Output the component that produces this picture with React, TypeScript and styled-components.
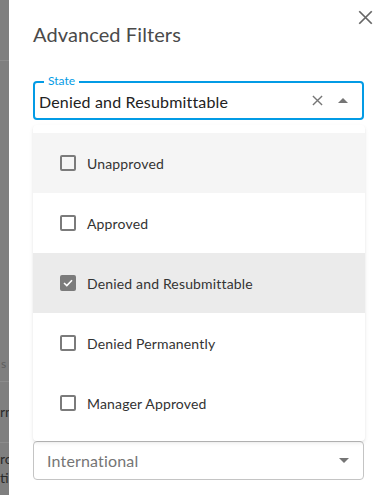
import React from 'react';
import styled, { createGlobalStyle } from 'styled-components';

const GlobalStyle = createGlobalStyle`
  html, body {
    margin: 0;
    padding: 0;
    background: #ffffff;
  }
  body {
    font-family: Lato, "Open Sans", "Liberation Sans", sans-serif;
  }
`;

const Screen = styled.div`
  display: flex;
  width: 378px;
  height: 495px;
  overflow: hidden;
`;

// dimmed page behind the drawer
const Backdrop = styled.div`
  width: 9px;
  flex: none;
  background: #7f7f7f;
  overflow: hidden;
  display: flex;
  flex-direction: column;
  font-size: 14px;
  color: #2b2b2b;
  white-space: nowrap;
`;

const BackdropRow = styled.div<{ $h: number; $line?: boolean; $align?: string }>`
  height: ${(p) => p.$h}px;
  flex: none;
  box-sizing: border-box;
  border-bottom: ${(p) => (p.$line ? '1px solid #8c8c8c' : 'none')};
  display: flex;
  flex-direction: column;
  justify-content: ${(p) => p.$align || 'flex-end'};
  padding: 6px 0 8px;
  line-height: 19px;
`;

const Faint = styled.span`
  color: #5e5e5e;
  font-size: 12px;
  margin-left: 1px;
`;

const Drawer = styled.div`
  position: relative;
  flex: 1;
  background: #ffffff;
  padding: 22px 14px 0 24px;
  box-sizing: border-box;
`;

const CloseButton = styled.button`
  position: absolute;
  top: 9px;
  right: 5px;
  width: 16px;
  height: 16px;
  padding: 0;
  border: none;
  background: none;
  display: flex;
  align-items: center;
  justify-content: center;
  cursor: pointer;
`;

const Title = styled.h2`
  margin: 0;
  font-size: 20px;
  line-height: 24px;
  font-weight: 400;
  letter-spacing: 0.1px;
  color: #4a4a4a;
`;

const Fields = styled.div`
  margin-top: 35px;
  display: flex;
  flex-direction: column;
  gap: 321px;
`;

const FieldWrap = styled.div`
  position: relative;
`;

const Outline = styled.div<{ $focused?: boolean }>`
  position: relative;
  height: 39px;
  box-sizing: border-box;
  border: ${(p) => (p.$focused ? '2px solid #039be5' : '1px solid #c4c4c4')};
  border-radius: 4px;
  display: flex;
  align-items: center;
  padding: ${(p) => (p.$focused ? '0 14px 0 4px' : '0 14px 0 13px')};
`;

const Legend = styled.span`
  position: absolute;
  top: -9px;
  left: 9px;
  padding: 0 4px;
  background: #ffffff;
  font-size: 12px;
  line-height: 14px;
  color: #039be5;
`;

const Value = styled.span<{ $placeholder?: boolean }>`
  flex: 1;
  font-size: 16px;
  line-height: 20px;
  letter-spacing: 0.17px;
  color: ${(p) => (p.$placeholder ? '#757575' : '#222222')};
  padding-top: ${(p) => (p.$placeholder ? '1px' : '2px')};
`;

const Adornments = styled.div`
  display: flex;
  align-items: center;
  gap: 15px;
`;

const Menu = styled.ul`
  position: absolute;
  top: 44px;
  left: 0;
  right: -1px;
  margin: 0;
  padding: 8px 0;
  list-style: none;
  background: #ffffff;
  border-radius: 4px;
  box-shadow: 0 2px 4px rgba(0, 0, 0, 0.08), 0 1px 2px rgba(0, 0, 0, 0.06);
  z-index: 2;
`;

const Option = styled.li<{ $tone?: 'hover' | 'selected' }>`
  height: 60px;
  display: flex;
  align-items: center;
  gap: 11px;
  padding-left: 27px;
  background: ${(p) =>
    p.$tone === 'selected' ? '#ebebeb' : p.$tone === 'hover' ? '#f5f5f5' : '#ffffff'};
  font-size: 14px;
  letter-spacing: 0.16px;
  color: #333333;
`;

const Box = styled.span<{ $checked?: boolean }>`
  width: 16px;
  height: 16px;
  box-sizing: border-box;
  border: 2px solid #7b7b7b;
  border-radius: 2px;
  background: ${(p) => (p.$checked ? '#7b7b7b' : 'transparent')};
  display: flex;
  align-items: center;
  justify-content: center;
  flex: none;
`;

const options = [
  { label: 'Unapproved', tone: 'hover' as const },
  { label: 'Approved' },
  { label: 'Denied and Resubmittable', tone: 'selected' as const, checked: true },
  { label: 'Denied Permanently' },
  { label: 'Manager Approved' },
];

function Cross({ size, color, width }: { size: number; color: string; width: number }) {
  return (
    <svg width={size} height={size} viewBox="0 0 12 12">
      <path d="M1 1 L11 11 M11 1 L1 11" stroke={color} strokeWidth={width} fill="none" />
    </svg>
  );
}

function Caret({ up }: { up?: boolean }) {
  return (
    <svg width="10" height="5" viewBox="0 0 10 5">
      <path d={up ? 'M0 5 L5 0 L10 5 Z' : 'M0 0 L5 5 L10 0 Z'} fill="#757575" />
    </svg>
  );
}

export default function App() {
  return (
    <Screen>
      <GlobalStyle />
      <Backdrop>
        <BackdropRow $h={61} $line />
        <BackdropRow $h={321} $line>
          <Faint>s</Faint>
        </BackdropRow>
        <BackdropRow $h={61} $line $align="center">
          <span>rn</span>
        </BackdropRow>
        <BackdropRow $h={52} $align="flex-start">
          <span>ro</span>
          <span>ti</span>
        </BackdropRow>
      </Backdrop>
      <Drawer>
        <CloseButton aria-label="Close">
          <Cross size={15} color="#666666" width={1.4} />
        </CloseButton>
        <Title>Advanced Filters</Title>
        <Fields>
          <FieldWrap>
            <Outline $focused>
              <Legend>State</Legend>
              <Value>Denied and Resubmittable</Value>
              <Adornments>
                <Cross size={11} color="#767676" width={1.5} />
                <Caret up />
              </Adornments>
            </Outline>
            <Menu>
              {options.map((o) => (
                <Option key={o.label} $tone={o.tone}>
                  <Box $checked={o.checked}>
                    {o.checked && (
                      <svg width="10" height="8" viewBox="0 0 10 8">
                        <path d="M1 4 L3.8 6.6 L9 1.2" stroke="#ffffff" strokeWidth="1.6" fill="none" />
                      </svg>
                    )}
                  </Box>
                  {o.label}
                </Option>
              ))}
            </Menu>
          </FieldWrap>
          <FieldWrap>
            <Outline>
              <Value $placeholder>International</Value>
              <Caret />
            </Outline>
          </FieldWrap>
        </Fields>
      </Drawer>
    </Screen>
  );
}
